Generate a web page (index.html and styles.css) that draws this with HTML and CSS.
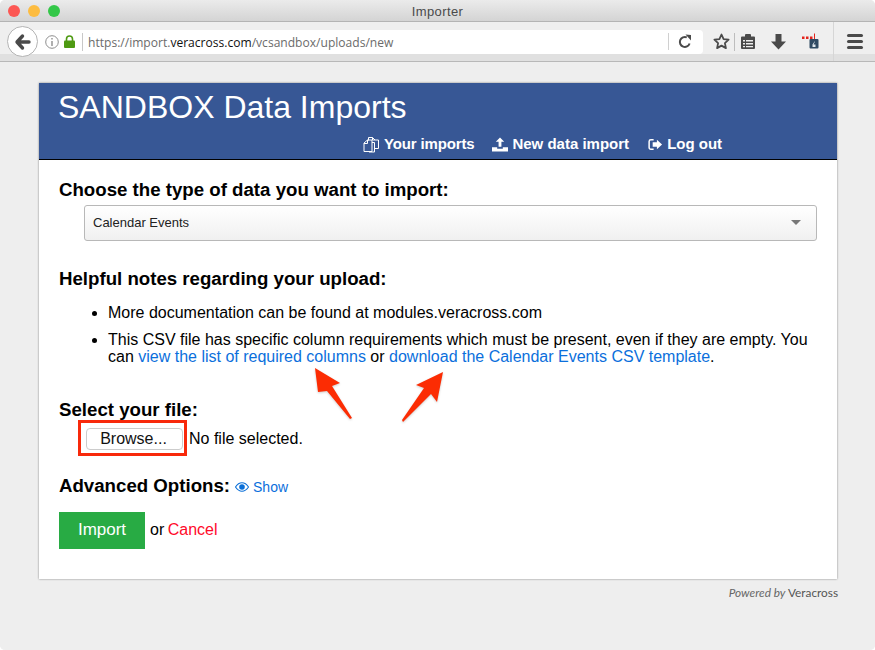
FILE: index.html
```html
<!DOCTYPE html>
<html lang="en">
<head>
<meta charset="utf-8">
<title>Importer</title>
<link rel="stylesheet" href="styles.css">
</head>
<body>
<div class="window">
  <div class="titlebar">
    <div class="lights"><span class="light red"></span><span class="light yellow"></span><span class="light green"></span></div>
    <div class="wintitle">Importer</div>
  </div>
  <div class="toolbar">
    <div class="back"><svg width="20" height="20" viewBox="0 0 20 20"><path d="M9.500 4 4 10l5.500 6M5 10h11" fill="none" stroke="#4a4a4a" stroke-width="3.400" stroke-linecap="round" stroke-linejoin="round"/></svg></div>
    <div class="urlbar">
      <svg class="info" width="14" height="14" viewBox="0 0 14 14"><circle cx="7" cy="7" r="6.300" fill="none" stroke="#8e8e8e"/><path d="M6.300 3h1.400v1.500H6.300zM6.300 6h1.400v5H6.300z" fill="#8e8e8e"/></svg>
      <svg class="lock" width="11" height="13" viewBox="0 0 11 13"><path d="M2.500 6V4a3 3 0 0 1 6 0v2" fill="none" stroke="#4e9a12" stroke-width="1.600"/><rect y="5.500" width="11" height="7.500" rx="1" fill="#4e9a12"/></svg>
      <span class="urlsep"></span>
      <div class="url">https://import.<b>veracross.com</b>/vcsandbox/uploads/new</div>
      <span class="urlsep2"></span>
      <svg class="reload" width="16" height="16" viewBox="0 0 16 16"><path d="M12.600 9.500A5 5 0 1 1 9.800 3.300" fill="none" stroke="#4a4a4a" stroke-width="2"/><path d="M8.500 0.500 14 1v5.500z" fill="#4a4a4a"/></svg>
    </div>
    <div class="tools">
      <svg class="star" width="17" height="17" viewBox="0 0 17 17"><path d="m8.500 1.500 2.100 4.600 5 .6-3.700 3.400 1 5-4.400-2.500-4.400 2.500 1-5L1.400 6.700l5-.6z" fill="none" stroke="#4a4a4a" stroke-width="1.800" stroke-linejoin="round"/></svg>
      <span class="toolsep"></span>
      <svg class="clip" width="14" height="15" viewBox="0 0 14 15"><path d="M1 2.500h12a1 1 0 0 1 1 1V14a1 1 0 0 1-1 1H1a1 1 0 0 1-1-1V3.500a1 1 0 0 1 1-1z" fill="#4a4a4a"/><rect x="4" y="0" width="6" height="4" rx="1" fill="#4a4a4a"/><path d="M2 6h2v1.500H2zM5 6h7v1.500H5zM2 9h2v1.500H2zM5 9h7v1.500H5zM2 12h2v1.300H2zM5 12h7v1.300H5z" fill="#eee"/></svg>
      <svg class="down" width="15" height="16" viewBox="0 0 15 16"><path d="M4.500 0h6v7.500h4.500L7.500 15.500 0 7.500h4.500z" fill="#4a4a4a"/></svg>
      <svg class="ext" width="18" height="16" viewBox="0 0 18 16"><path d="M0 3.500h2.500V6H0zM4 3.500h2.500V6H4zM8 3.500h2.500V6H8z" fill="#e3241c"/><rect x="12" y="0.500" width="1" height="6" fill="#e3241c"/><rect x="7.500" y="6" width="9" height="9.500" rx="1" fill="#2f4a63"/><path d="M10.500 11.500h3v2.500h-3zM10.500 11.500l2-3h.5l-1.500 3" fill="#dfe6ec"/></svg>
      <span class="toolsep2"></span>
      <div class="menu"><span></span><span></span><span></span></div>
    </div>
  </div>
  <main class="page">
    <section class="card">
      <header class="cardhead">
        <h1>SANDBOX Data Imports</h1>
        <nav class="nav">
          <a><svg width="17" height="17" viewBox="0 0 17 17"><path d="M5.500 4.500V1.500h4l2.500 2.500M9.500 1.500V4H12h3.500v8.500H11" fill="none" stroke="#fff"/><path d="M1 7 4.500 4H9v11.500H1zM4.500 4v3.500H1M9 6.500h2.500v9.500H6" fill="none" stroke="#fff"/></svg>Your imports</a>
          <a class="nav-new"><svg width="16" height="15" viewBox="0 0 17 15"><path d="M8.500 0 13 4.500h-3V10H7V4.500H4zM0 10.500h5.500V12h6v-1.500H17V15H0z" fill="#fff"/></svg>New data import</a>
          <a class="nav-out"><svg width="15" height="13" viewBox="0 0 16 13"><path d="M6 1.500H3A1.800 1.800 0 0 0 1.200 3.300v6.400A1.800 1.800 0 0 0 3 11.500h3" fill="none" stroke="#fff" stroke-width="1.600"/><path d="M9.500 1.500 15 6.500l-5.500 5V9H5V4h4.500z" fill="#fff"/></svg>Log out</a>
        </nav>
      </header>
      <div class="cardbody">
        <h2 class="h-type">Choose the type of data you want to import:</h2>
        <div class="select"><span>Calendar Events</span><i class="caret"></i></div>
        <h2 class="h-notes">Helpful notes regarding your upload:</h2>
        <ul class="notes">
          <li>More documentation can be found at modules.veracross.com</li>
          <li>This CSV file has specific column requirements which must be present, even if they are empty. You can <a>view the list of required columns</a> or <a>download the Calendar Events CSV template</a>.</li>
        </ul>
        <h2 class="h-file">Select your file:</h2>
        <div class="filerow">
          <div class="hilite"><button class="browse" type="button">Browse...</button></div>
          <span class="nofile">No file selected.</span>
        </div>
        <div class="advanced">
          <h2>Advanced Options:</h2>
          <a class="show"><svg width="14" height="10" viewBox="0 0 14 10"><path d="M.5 5C2.500 2 4.500.8 7 .8S11.500 2 13.500 5C11.500 8 9.500 9.200 7 9.200S2.500 8 .5 5z" fill="none" stroke="#0a6fd8" stroke-width="1.100"/><circle cx="7" cy="5" r="2.800" fill="#0a6fd8"/></svg>Show</a>
        </div>
        <div class="actions">
          <button class="import" type="button">Import</button>
          <span>or <a class="cancel">Cancel</a></span>
        </div>
      </div>
    </section>
    <footer class="powered"><em>Powered by</em> Veracross</footer>
    <svg class="arrows" width="130" height="56" viewBox="0 0 130 56">
      <path d="M0 0 25 15 17 18 37 50 35 51 12 23 3 24z" fill="#fc2c03"/>
      <path d="M128 4 122 34 116 26 88 54 87 52 109 20 101 17z" fill="#fc2c03"/>
    </svg>
  </main>
</div>
</body>
</html>
```
FILE: styles.css
```css
* { box-sizing: border-box; }
html, body { margin: 0; padding: 0; }
body { width: 875px; height: 650px; overflow: hidden; font-family: "Liberation Sans", Arial, sans-serif; background: #fff; color: #000; }
.window { width: 875px; height: 650px; display: flex; flex-direction: column; background: #eee; border-radius: 5px; overflow: hidden; }

.titlebar { height: 22px; flex: none; display: flex; align-items: center; position: relative; background: linear-gradient(#ebebeb, #d4d4d4); border-bottom: 1px solid #b4b4b4; }
.lights { display: flex; gap: 8px; padding-left: 8px; }
.light { width: 12px; height: 12px; border-radius: 50%; }
.red { background: #fc5753; }
.yellow { background: #fdbc40; }
.green { background: #33c748; }
.wintitle { position: absolute; left: 0; right: 0; top: 4px; text-align: center; font-size: 13px; line-height: 16px; color: #4a4a4a; letter-spacing: .4px; }

.toolbar { height: 40px; flex: none; display: flex; align-items: center; background: #efefef; border-bottom: 1px solid #b8b8b8; box-shadow: inset 0 -8px 0 -1px #e0e0e0; padding-left: 7px; }
.back { width: 31px; height: 31px; flex: none; border-radius: 50%; background: #fff; border: 1px solid #b4b4b4; display: flex; align-items: center; justify-content: center; position: relative; z-index: 1; }
.urlbar { width: 672px; height: 24px; flex: none; margin-left: -7px; background: #fff; border-radius: 0 4px 4px 0; display: flex; align-items: center; padding-left: 14px; }
.info { flex: none; }
.lock { flex: none; margin-left: 5px; }
.urlsep { width: 1px; height: 18px; background: #c8c8c8; margin-left: 7px; flex: none; }
.url { font-family: "Open Sans", sans-serif; font-size: 12.070px; color: #6b6b6b; margin-left: 5px; width: 580px; padding-top: 2px; white-space: nowrap; overflow: hidden; }
.url b { font-weight: 400; color: #111; }
.urlsep2 { width: 1px; height: 17px; background: #d0d0d0; flex: none; }
.reload { flex: none; margin-left: 8px; }
.tools { display: flex; align-items: center; margin-left: 10px; flex: 1; height: 39px; }
.star { flex: none; }
.toolsep { width: 1px; height: 18px; background: #bdbdbd; margin-left: 4px; flex: none; }
.clip { flex: none; margin-left: 6px; }
.down { flex: none; margin-left: 16px; }
.ext { flex: none; margin-left: 16px; margin-top: -1px; }
.toolsep2 { width: 1px; height: 39px; background: #d6d6d6; margin-left: 13px; flex: none; }
.menu { display: flex; flex-direction: column; gap: 3px; margin-left: 13px; }
.menu span { width: 16px; height: 3px; border-radius: 1.500px; background: #4a4a4a; }

.page { flex: 1; position: relative; padding: 21px 38px 0 39px; background: #eee; }
.card { height: 496px; background: #fff; box-shadow: 0 0 2px rgba(0,0,0,.45); }
.cardhead { height: 77px; background: #375795; border-bottom: 1px solid #000; padding: 6px 0 0 19px; color: #fff; }
.cardhead h1 { margin: 0; font-size: 32px; line-height: 37px; font-weight: 400; }
.nav { display: flex; gap: 18px; margin-top: 8px; padding-left: 305px; }
.nav a { display: flex; align-items: center; gap: 4px; font-size: 15px; line-height: 20px; font-weight: 700; letter-spacing: -.15px; white-space: nowrap; }
.nav .nav-new { letter-spacing: 0; }
.nav .nav-out { margin-left: 1px; letter-spacing: 0; }

.cardbody { padding: 19px 20px 0 20px; font-size: 16px; }
h2 { margin: 0; font-size: 18.670px; line-height: 22px; font-weight: 700; }
.select { height: 36px; margin: 4px 0 0 25px; border: 1px solid #b8b8b8; border-radius: 3px; background: linear-gradient(#fff, #f0f0f0); display: flex; align-items: center; justify-content: space-between; padding: 0 15px 2px 8px; font-size: 13px; color: #222; }
.caret { width: 0; height: 0; border-left: 5px solid transparent; border-right: 5px solid transparent; border-top: 5px solid #777; }
.h-notes { margin-top: 27px; }
.notes { margin: 14px 0 0; padding: 0 0 0 49px; font-size: 16px; line-height: 17px; }
.notes li { margin-bottom: 10px; }
.notes a { color: #0b6fdc; }
.h-file { margin-top: 34px; }
.filerow { display: flex; align-items: center; gap: 2px; font-size: 16px; margin: -1px 0 0 19px; }
.nofile { padding-top: 1px; }
.hilite { border: 3px solid #f8290b; padding: 5px 3px 5px 5px; width: 109px; height: 36px; }
.browse { width: 97px; height: 22px; padding: 0 2px 0 0; font: 16px "Liberation Sans", Arial, sans-serif; color: #111; background: #fff; border: 1px solid #ccc; border-radius: 4px; display: block; }
.advanced { display: flex; align-items: baseline; gap: 5px; margin-top: 19px; }
.show { display: inline-flex; align-items: center; gap: 4px; color: #0b6fdc; font-size: 14px; }
.actions { display: flex; align-items: center; gap: 5px; margin-top: 15px; font-size: 16px; }
.import { width: 86px; height: 37px; padding: 0 0 2px; border: 0; background: #28ab44; color: #fff; font: 17px "Liberation Sans", Arial, sans-serif; }
.actions span { padding-bottom: 2px; word-spacing: -1px; }
.cancel { color: #ff0a2a; }
.powered { text-align: right; font-family: Lato, sans-serif; font-size: 11.800px; line-height: 16px; margin-top: 6px; margin-right: -1px; color: #555; }
.powered em { color: #666; }
.arrows { position: absolute; left: 315px; top: 306px; filter: drop-shadow(0 1px 1px rgba(0,0,0,.2)); }
```
